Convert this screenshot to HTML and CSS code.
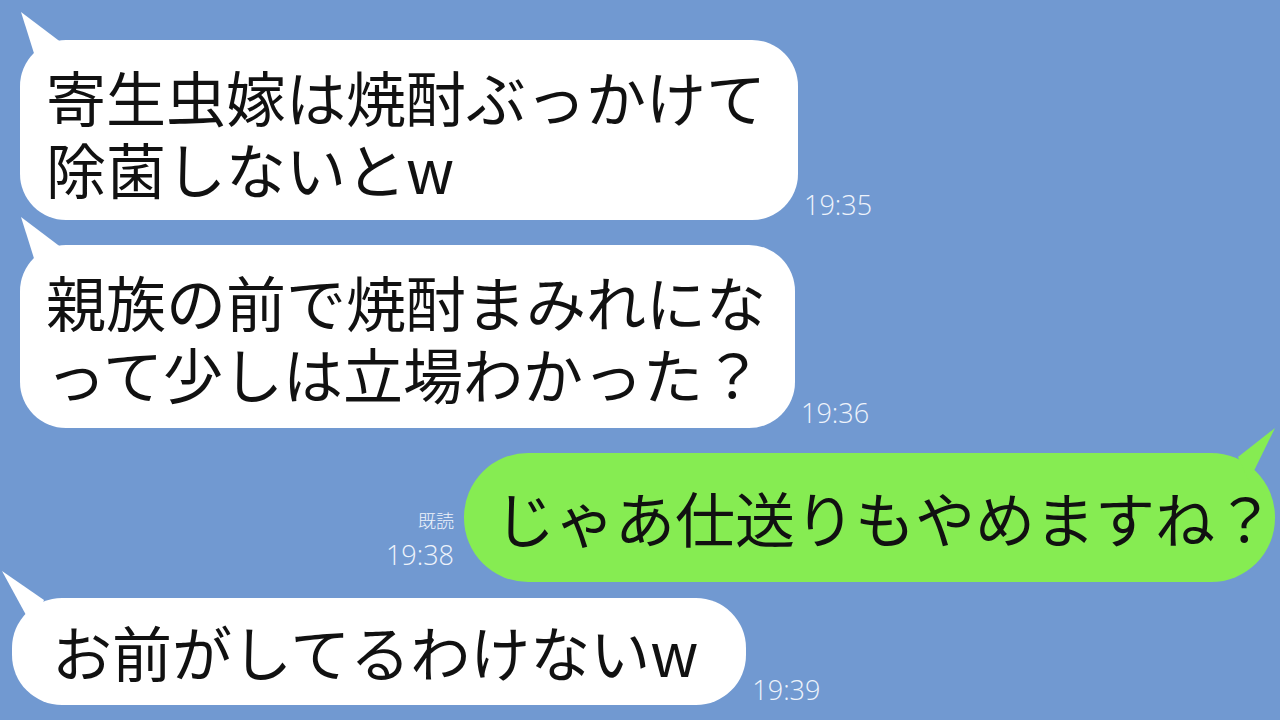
FILE: index.html
```html
<!DOCTYPE html>
<html lang="ja">
<head>
  <meta charset="UTF-8" />
  <title>トーク</title>
  <link rel="stylesheet" href="styles.css">
</head>
<body>
  <div class="chat">
    <div class="row row-in row-first">
      <div class="bubble bubble-in bubble-tall">
        <svg class="tail tail-in" width="50" height="60" viewBox="0 0 50 60"><polygon points="3,2 44,33 20,56" /></svg>
        寄生虫嫁は焼酎ぶっかけて<br>除菌しないとw
      </div>
      <div class="meta"><span class="time">19:35</span></div>
    </div>

    <div class="row row-in">
      <div class="bubble bubble-in bubble-tall bubble-second">
        <svg class="tail tail-in" width="50" height="60" viewBox="0 0 50 60"><polygon points="3,2 44,33 20,56" /></svg>
        親族の前で焼酎まみれにな<br>って少しは立場わかった？
      </div>
      <div class="meta"><span class="time">19:36</span></div>
    </div>

    <div class="row row-out">
      <div class="meta meta-out"><span class="read">既読</span><span class="time">19:38</span></div>
      <div class="bubble bubble-out">
        <svg class="tail tail-out" width="50" height="60" viewBox="0 0 50 60"><polygon points="48,3 11,32 22,56" /></svg>
        じゃあ仕送りもやめますね？
      </div>
    </div>

    <div class="row row-in row-last">
      <div class="bubble bubble-in bubble-short">
        <svg class="tail tail-last" width="50" height="60" viewBox="0 0 50 60"><polygon points="2,3 44,32 32,58" /></svg>
        お前がしてるわけないw
      </div>
      <div class="meta"><span class="time">19:39</span></div>
    </div>
  </div>
</body>
</html>
```

FILE: styles.css
```css
body {
  margin: 0;
  background: #7199d1;
  font-family: "Noto Sans CJK JP", "Noto Sans", sans-serif;
  overflow: hidden;
}

.chat {
  display: flex;
  flex-direction: column;
  gap: 25px;
  padding: 40px 5px 0 20px;
}

.row {
  display: flex;
  align-items: flex-end;
}

.row-out {
  justify-content: flex-end;
}

.row-last {
  margin-top: -9px;
  margin-left: -8px;
}

.bubble {
  position: relative;
  font-size: 60px;
  line-height: 72px;
  color: #111;
  white-space: nowrap;
}

.bubble-in {
  background: #fff;
  border-radius: 46px;
}

.bubble-tall {
  padding: 20px 32px 16px 26px;
}

.bubble-second {
  padding-right: 29px;
  padding-bottom: 19px;
}

.bubble-short {
  padding: 17px 48px 18px 40px;
  border-radius: 50px;
}

.bubble-out {
  background: #86ec52;
  border-radius: 64px;
  padding: 28px 0 29px 31px;
}

.tail {
  position: absolute;
  top: -30px;
}

.tail-in {
  left: -2px;
  fill: #fff;
}

.tail-last {
  left: -12px;
  fill: #fff;
}

.tail-out {
  right: -2px;
  top: -28px;
  fill: #86ec52;
}

.meta {
  display: flex;
  flex-direction: column;
  align-items: flex-end;
  font-family: "Open Sans", "Noto Sans CJK JP", sans-serif;
  font-weight: 300;
  color: #eef3fb;
  padding: 0 6px;
}

.meta-out {
  padding: 0 10px 12px 0;
}

.time {
  font-size: 27px;
  line-height: 30px;
}

.read {
  font-size: 18px;
  line-height: 22px;
  margin-bottom: 8px;
}
```
